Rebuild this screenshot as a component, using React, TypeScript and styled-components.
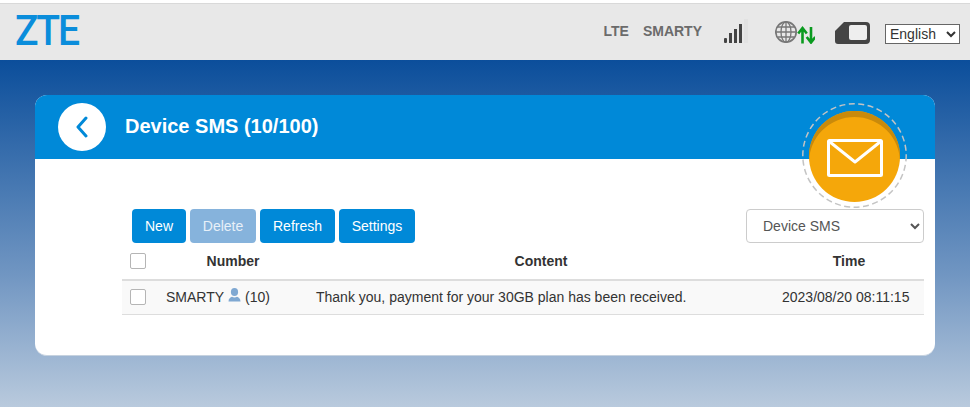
import React from "react";
import styled, { createGlobalStyle } from "styled-components";

const Global = createGlobalStyle`
  html, body { margin: 0; padding: 0; background: #fff; }
  body { font-family: "Liberation Sans", Arial, sans-serif; color: #333; overflow: hidden; }
`;

const Page = styled.div`
  width: 970px;
  height: 407px;
  display: flex;
  flex-direction: column;
`;

const TopBar = styled.header`
  margin-top: 3px;
  height: 56px;
  border-top: 1px solid #d9d9d9;
  background: #e8e8e8;
  display: flex;
  align-items: flex-start;
  justify-content: space-between;
`;

const Logo = styled.div`
  margin: 5px 0 0 15px;
  font-family: "Roboto", sans-serif;
  font-weight: 500;
  font-size: 42px;
  line-height: 44px;
  letter-spacing: -2.4px;
  color: #0a8ddb;
  transform: scaleX(0.93);
  transform-origin: left center;
`;

const Status = styled.div`
  display: flex;
  align-items: flex-start;
  padding-right: 10px;
`;

const StatusText = styled.span<{ $gap: number }>`
  margin: 19px ${(p) => p.$gap}px 0 0;
  font-size: 14px;
  line-height: 16px;
  font-weight: 700;
  color: #6b6b6b;
`;

const StatusIcon = styled.svg<{ $gap: number; $top: number }>`
  display: block;
  margin: ${(p) => p.$top}px ${(p) => p.$gap}px 0 0;
`;

const LangSelect = styled.select`
  margin-top: 20px;
  width: 75px;
  height: 20px;
  padding: 0;
  border: 1px solid #666;
  background: #fff;
  font-family: "Liberation Sans", Arial, sans-serif;
  font-size: 14px;
  color: #333;
`;

const Stage = styled.main`
  flex: 1;
  padding: 35px 35px 0;
  background: linear-gradient(180deg, #0b4e9b 0%, #7196c2 62%, #b9cadd 100%);
`;

const Card = styled.section`
  position: relative;
  width: 900px;
  height: 261px;
  box-sizing: border-box;
  background: #fff;
  border-radius: 12px;
  border-bottom: 1px solid #c6d2df;
`;

const CardHead = styled.div`
  height: 64px;
  display: flex;
  align-items: center;
  gap: 19px;
  padding: 0 0 2px 23px;
  box-sizing: border-box;
  background: #0089d8;
  border-radius: 12px 12px 0 0;
`;

const BackButton = styled.button`
  width: 48px;
  height: 48px;
  padding: 0;
  border: 0;
  border-radius: 50%;
  background: #fff;
  display: flex;
  align-items: center;
  justify-content: center;
  margin-top: 2px;
`;

const Title = styled.h1`
  margin: 0;
  font-size: 20px;
  line-height: 24px;
  font-weight: 700;
  color: #fff;
`;

const Badge = styled.div`
  position: absolute;
  left: 767px;
  top: 8px;
  width: 105px;
  height: 105px;
  display: flex;
  align-items: center;
  justify-content: center;
`;

const BadgeRing = styled.svg`
  position: absolute;
  inset: 0;
`;

const BadgeDisc = styled.div`
  width: 91px;
  height: 91px;
  margin-top: 1px;
  border-radius: 50%;
  background: #f5a70a;
  box-shadow: inset 0 6px 0 #c98a0b;
  display: flex;
  align-items: center;
  justify-content: center;
`;

const EnvelopeIcon = styled.svg`
  display: block;
  margin-top: 4px;
`;

const Content = styled.div`
  padding: 50px 11px 0 87px;
`;

const Toolbar = styled.div`
  display: flex;
  align-items: center;
  gap: 4px;
  padding-left: 10px;
`;

const ActionButton = styled.button<{ $w: number; $off?: boolean }>`
  width: ${(p) => p.$w}px;
  height: 34px;
  padding: 0;
  border: 0;
  border-radius: 4px;
  background: ${(p) => (p.$off ? "#86b3dc" : "#0089d8")};
  color: ${(p) => (p.$off ? "#e8f0f8" : "#fff")};
  font-family: "Liberation Sans", Arial, sans-serif;
  font-size: 14px;
`;

const SourceSelect = styled.select`
  margin-left: auto;
  width: 178px;
  height: 34px;
  padding: 0 8px 0 12px;
  box-sizing: border-box;
  border: 1px solid #ccc;
  border-radius: 4px;
  background: #fff;
  font-family: "Liberation Sans", Arial, sans-serif;
  font-size: 14px;
  color: #555;
`;

const GridRow = styled.div`
  display: grid;
  grid-template-columns: 44px 134px 482px 134px 8px;
  align-items: center;
`;

const HeadRow = styled(GridRow)`
  height: 38px;
  border-bottom: 2px solid #ddd;
  box-sizing: border-box;
`;

const BodyRow = styled(GridRow)`
  height: 34px;
  padding-bottom: 2px;
  box-sizing: border-box;
  background: #f9f9f9;
  border-bottom: 1px solid #ddd;
`;

const Check = styled.input.attrs({ type: "checkbox" })`
  appearance: none;
  display: block;
  width: 16px;
  height: 16px;
  margin: 0 0 0 8px;
  box-sizing: border-box;
  border: 1px solid #b5b5b5;
  border-radius: 2px;
  background: #fff;
`;

const HeadCell = styled.div`
  text-align: center;
  font-size: 14px;
  font-weight: 700;
  color: #333;
`;

const NumberCell = styled.div`
  display: flex;
  align-items: center;
  font-size: 14px;
  color: #333;
`;

const Count = styled.span`
  margin-left: 4px;
`;

const PersonIcon = styled.svg`
  display: block;
  margin-left: 4px;
  margin-top: -3px;
`;

const MessageCell = styled.div`
  padding-left: 16px;
  font-size: 14px;
  color: #333;
  white-space: nowrap;
`;

const TimeCell = styled.div`
  font-size: 14px;
  color: #333;
  white-space: nowrap;
`;

export default function App() {
  return (
    <>
      <Global />
      <Page>
        <TopBar>
          <Logo>ZTE</Logo>
          <Status>
            <StatusText $gap={14}>LTE</StatusText>
            <StatusText $gap={21}>SMARTY</StatusText>
            <StatusIcon $gap={26} $top={15} width="26" height="25" viewBox="0 0 26 25">
              <rect x="1" y="19" width="3" height="5" rx="1" fill="#444" />
              <rect x="6" y="14" width="3" height="10" fill="#444" />
              <rect x="11" y="10" width="3" height="14" fill="#444" />
              <rect x="16" y="5" width="3" height="19" fill="#444" />
              <rect x="21" y="0" width="4" height="24" fill="#e2e2e2" />
            </StatusIcon>
            <StatusIcon $gap={20} $top={16} width="40" height="24" viewBox="0 0 40 24">
              <g fill="none" stroke="#777" strokeWidth="1.3">
                <circle cx="11" cy="12" r="10.2" strokeWidth="1.7" />
                <ellipse cx="11" cy="12" rx="5" ry="10.2" />
                <path d="M11 2v20M1 12h20M2.500 7h17M2.500 17h17" />
              </g>
              <path d="M27.500 23.500V9M23.200 13.500l4.300-5.500 4.300 5.500M36 7v14.500M31.700 17l4.300 5.500 4.300-5.500" fill="none" stroke="#0a9a1f" strokeWidth="2.6" />
            </StatusIcon>
            <StatusIcon $gap={15} $top={18} width="35" height="22" viewBox="0 0 35 22">
              <path d="M9 0h22a4 4 0 0 1 4 4v14a4 4 0 0 1-4 4H3a3 3 0 0 1-3-3V9z" fill="#444" />
              <rect x="14" y="3" width="18" height="15" rx="2" fill="#eee" />
            </StatusIcon>
            <LangSelect defaultValue="en" aria-label="Language">
              <option value="en">English</option>
            </LangSelect>
          </Status>
        </TopBar>
        <Stage>
          <Card>
            <CardHead>
              <BackButton aria-label="Back">
                <svg width="14" height="22" viewBox="0 0 14 22" fill="none">
                  <path d="M11 2L3 11l8 9" stroke="#0089d8" strokeWidth="3" strokeLinecap="round" strokeLinejoin="round" />
                </svg>
              </BackButton>
              <Title>Device SMS (10/100)</Title>
            </CardHead>
            <Badge>
              <BadgeRing width="105" height="105" viewBox="0 0 105 105">
                <circle cx="52.500" cy="52.500" r="51.700" fill="none" stroke="#c4c4c4" strokeWidth="1.500" strokeDasharray="6 3.500" />
              </BadgeRing>
              <BadgeDisc>
                <EnvelopeIcon width="56" height="38" viewBox="0 0 56 38" fill="none" stroke="#fff" strokeWidth="3" strokeLinejoin="round">
                  <rect x="1.500" y="1.500" width="53" height="35" rx="1" />
                  <path d="M3 3l25 20L53 3" />
                </EnvelopeIcon>
              </BadgeDisc>
            </Badge>
            <Content>
              <Toolbar>
                <ActionButton $w={54}>New</ActionButton>
                <ActionButton $w={66} $off>Delete</ActionButton>
                <ActionButton $w={75}>Refresh</ActionButton>
                <ActionButton $w={76}>Settings</ActionButton>
                <SourceSelect defaultValue="device" aria-label="SMS source">
                  <option value="device">Device SMS</option>
                </SourceSelect>
              </Toolbar>
              <HeadRow>
                <Check aria-label="Select all" />
                <HeadCell>Number</HeadCell>
                <HeadCell>Content</HeadCell>
                <HeadCell>Time</HeadCell>
              </HeadRow>
              <BodyRow>
                <Check aria-label="Select message" />
                <NumberCell>
                  SMARTY
                  <PersonIcon width="13" height="14" viewBox="0 0 13 14">
                    <ellipse cx="6.500" cy="4" rx="3.600" ry="4" fill="#7fa8d2" />
                    <path d="M0.500 13.500c0-3 2-4.200 3.500-4.700 1.500 1 3.500 1 5 0 1.500.5 3.500 1.700 3.500 4.700z" fill="#7fa8d2" />
                  </PersonIcon>
                  <Count>(10)</Count>
                </NumberCell>
                <MessageCell>Thank you, payment for your 30GB plan has been received.</MessageCell>
                <TimeCell>2023/08/20 08:11:15</TimeCell>
              </BodyRow>
            </Content>
          </Card>
        </Stage>
      </Page>
    </>
  );
}
